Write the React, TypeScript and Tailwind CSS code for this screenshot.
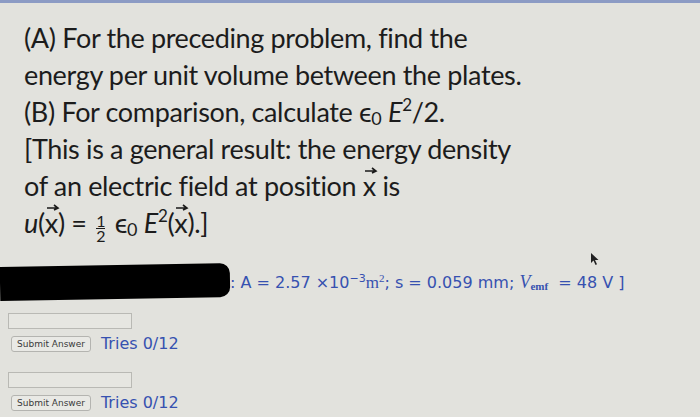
import React from 'react';

function Vec() {
  return (
    <span className="relative inline-block">
      x
      <svg className="absolute left-[1px] top-[-1px] w-[14px] h-[8px]" viewBox="0 0 14 8">
        <path d="M1 5 L12 5 M8 2 L12 5 L8 7" stroke="#1a1a1a" strokeWidth="1.6" fill="none" />
      </svg>
    </span>
  );
}

function Eps() {
  return (
    <span>
      ϵ<sub className="text-[18px] leading-[0] relative top-[3px] align-baseline">0</sub>
    </span>
  );
}

function Sq() {
  return <sup className="text-[17px] leading-[0] relative top-[-11px] align-baseline">2</sup>;
}

function Line({ children }: { children: React.ReactNode }) {
  return <div className="h-[37px] whitespace-nowrap">{children}</div>;
}

function Problem() {
  return (
    <div
      className="pl-[24px] pt-[16px] text-[27px] leading-[37px] tracking-[-0.35px] text-[#1c1c1c] [font-variant-ligatures:none]"
      style={{ fontFamily: 'Lato, "Noto Sans", sans-serif' }}
    >
      <Line>(A) For the preceding problem, find the</Line>
      <Line>energy per unit volume between the plates.</Line>
      <Line>
        (B) For comparison, calculate <Eps /> <i>E</i>
        <Sq />/2.
      </Line>
      <Line>[This is a general result: the energy density</Line>
      <Line>
        of an electric field at position <Vec /> is
      </Line>
      <Line>
        <i>u</i>(<Vec />) ={' '}
        <span className="inline-flex flex-col items-center align-middle text-[16px] leading-[14px] mx-[3px] relative top-[2px]">
          <span>1</span>
          <span className="w-[9px] h-[1px] bg-[#1c1c1c]" />
          <span>2</span>
        </span>{' '}
        <Eps /> <i>E</i>
        <Sq />(<Vec />).]
      </Line>
    </div>
  );
}

function AnswerRow() {
  return (
    <div className="pl-[8px]">
      <div className="w-[124px] h-[16px] border border-[#b9b9b4] bg-[#e6e6e1]" />
      <div className="flex items-center gap-[10px] mt-[7px] pl-[3px] h-[16px]">
        <button
          className="h-[16px] px-[5px] border border-[#b4b4b0] rounded-[3px] bg-[#e9e9e5] text-[9px] text-[#3a3a3a] leading-none"
          style={{ fontFamily: '"DejaVu Sans", sans-serif' }}
        >
          Submit Answer
        </button>
        <span className="text-[16px] text-[#3651b0]" style={{ fontFamily: '"DejaVu Sans", sans-serif' }}>
          Tries 0/12
        </span>
      </div>
    </div>
  );
}

export default function App() {
  return (
    <div className="w-[700px] h-[417px] bg-[#e2e2dd] overflow-hidden relative">
      <div className="h-[3px] bg-[#8c9bc4]" />
      <Problem />

      {/* given data row */}
      <div className="flex items-center mt-[23px] h-[36px]">
        <div className="w-[230px] h-[34px] bg-black rounded-r-[10px] -rotate-1" />
        <span className="text-[16px] text-[#3651b0] whitespace-nowrap" style={{ fontFamily: '"DejaVu Sans", sans-serif' }}>
          : A = 2.57 ×10<sup className="text-[11px]">−3</sup>
          <span style={{ fontFamily: '"Liberation Serif", serif' }} className="text-[17px]">
            m<sup className="text-[11px]">2</sup>
          </span>
          ; s = 0.059 mm;{' '}
          <i style={{ fontFamily: '"Liberation Serif", serif' }} className="text-[18px]">V</i>
          <sub className="text-[11px] font-bold" style={{ fontFamily: '"Liberation Serif", serif' }}>emf</sub>
          &nbsp; = 48 V ]
        </span>
      </div>

      <div className="mt-[13px]">
        <AnswerRow />
      </div>
      <div className="mt-[20px]">
        <AnswerRow />
      </div>

      {/* mouse cursor */}
      <svg className="absolute left-[590px] top-[252px] w-[10px] h-[14px]" viewBox="0 0 10 14">
        <path d="M1 1 L1 11 L3.5 8.5 L5.5 13 L7 12.3 L5 8 L8.5 8 Z" fill="#222" />
      </svg>
    </div>
  );
}
